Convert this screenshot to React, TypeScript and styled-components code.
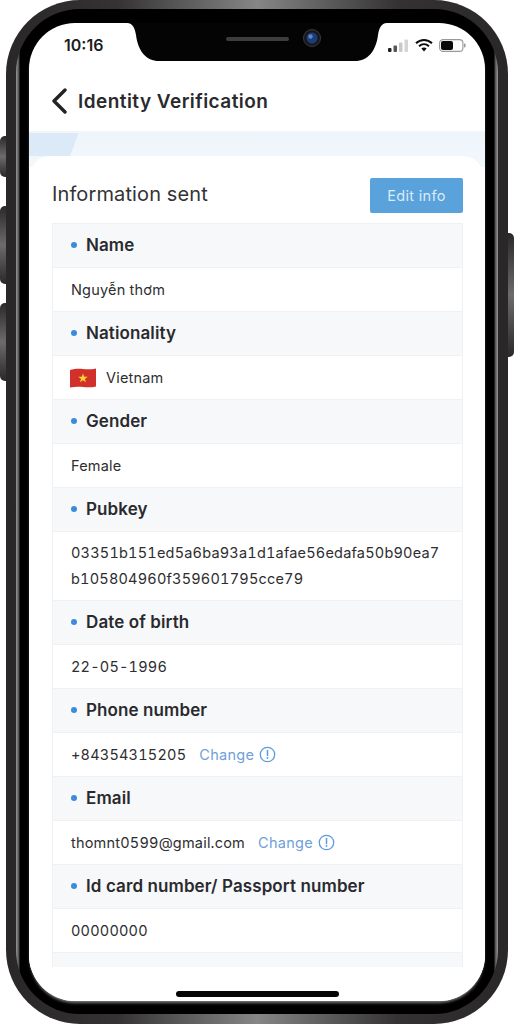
import React from "react";
import styled, { createGlobalStyle } from "styled-components";

const Global = createGlobalStyle`
  html, body { margin: 0; padding: 0; background: #fff; }
  body { font-family: Inter, "Liberation Sans", sans-serif; }
  * { box-sizing: border-box; }
`;

const Stage = styled.div`
  position: relative;
  width: 514px;
  height: 1024px;
  padding: 0 6px;
  overflow: hidden;
`;

const SideButton = styled.div<{ $top: number; $height: number; $right?: boolean }>`
  position: absolute;
  top: ${(p) => p.$top}px;
  height: ${(p) => p.$height}px;
  width: 8px;
  ${(p) => (p.$right ? "right: 0;" : "left: 0;")}
  border-radius: ${(p) => (p.$right ? "0 5px 5px 0" : "5px 0 0 5px")};
  background: linear-gradient(180deg, #2a2829 0%, #6c6c6c 50%, #2a2829 100%);
`;

const Body = styled.div`
  position: relative;
  height: 1024px;
  padding: 9px 10px 10px;
  border-radius: 74px;
  background: linear-gradient(90deg, #2a2728 0%, #343233 22%, #868686 50%, #343233 78%, #2a2728 100%);
`;

const Rim = styled.div`
  height: 100%;
  padding: 14px 13px 13px;
  border-radius: 64px;
  background: linear-gradient(90deg, #9a9a9a 0, #4a4a4a 3px, #000 4px, #000 calc(100% - 4px), #4a4a4a calc(100% - 3px), #9a9a9a 100%);
`;

const Screen = styled.div`
  position: relative;
  display: flex;
  flex-direction: column;
  height: 100%;
  overflow: hidden;
  border-radius: 46px;
  background: #fff;
  color: #222;
  box-shadow: 0 3px 3px -1px #777;
`;

const Notch = styled.svg`
  position: absolute;
  top: 0;
  left: 98px;
  width: 260px;
  height: 38px;
`;

const StatusBar = styled.div`
  display: flex;
  align-items: center;
  justify-content: space-between;
  height: 44px;
  padding: 0 19px 0 35px;
`;

const Time = styled.span`
  font-size: 16px;
  font-weight: 600;
  color: #1c1c1c;
`;

const StatusIcons = styled.div`
  display: flex;
  align-items: center;
  gap: 6px;
`;

const Header = styled.header`
  display: flex;
  align-items: center;
  gap: 11px;
  height: 66px;
  padding: 4px 0 0 22px;
  border-bottom: 2px solid #f3f5f8;
`;

const Title = styled.h1`
  margin: 0;
  font-size: 19px;
  font-weight: 600;
  letter-spacing: 0.45px;
  color: #2a2a2e;
`;

const Main = styled.main`
  flex: 1;
  min-height: 0;
  overflow: hidden;
  padding: 23px 2px 0 1px;
  background:
    linear-gradient(110deg, #dce9f6 0, #dce9f6 46px, transparent 47px) 0 0 / 100% 23px no-repeat,
    linear-gradient(#edf4fb, #f3f8fc) 0 0 / 100% 34px no-repeat,
    #fff;
`;

const Card = styled.section`
  height: 100%;
  overflow: hidden;
  padding: 22px 20px 0 22px;
  border-radius: 20px 20px 0 0;
  background: #fff;
`;

const CardHead = styled.div`
  display: flex;
  align-items: center;
  justify-content: space-between;
  height: 35px;
  margin-bottom: 10px;
`;

const CardTitle = styled.h2`
  margin: 0;
  padding-bottom: 3px;
  font-size: 20px;
  font-weight: 400;
  letter-spacing: 0.12px;
  color: #333;
`;

const EditButton = styled.button`
  width: 93px;
  height: 35px;
  padding: 0;
  border: 0;
  border-radius: 2px;
  background: #5aa2dc;
  color: #dcebf7;
  font: 400 14.5px Inter, "Liberation Sans", sans-serif;
  letter-spacing: 0.3px;
`;

const Table = styled.div`
  border-left: 1px solid #eff1f3;
  border-right: 1px solid #eff1f3;
`;

const LabelRow = styled.div`
  display: flex;
  align-items: center;
  gap: 9px;
  height: 45px;
  padding: 0 0 1px 18px;
  background: #f6f8fa;
  border-top: 1px solid #eff1f3;
  border-bottom: 1px solid #eff1f3;
  font-size: 17px;
  font-weight: 600;
  letter-spacing: 0.1px;
  color: #2a2a2e;
`;

const Dot = styled.span`
  width: 6px;
  height: 6px;
  border-radius: 50%;
  background: #3d8bdc;
`;

const ValueRow = styled.div<{ $tall?: boolean }>`
  display: flex;
  align-items: center;
  gap: 9px;
  height: ${(p) => (p.$tall ? 68 : 43)}px;
  padding-left: 18px;
  font-size: 14.5px;
  line-height: 26px;
  letter-spacing: 0.2px;
  font-feature-settings: "tnum";
  color: #2e2e30;
`;

const FlagIcon = styled.svg`
  margin-left: -2px;
`;

const ChangeLink = styled.span`
  display: inline-flex;
  align-items: center;
  gap: 5px;
  margin-left: 4px;
  letter-spacing: 0.3px;
  color: #6f9fd8;
`;

const Footer = styled.div`
  display: flex;
  align-items: flex-end;
  justify-content: center;
  height: 34px;
  padding-bottom: 4px;
  background: #fff;
`;

const HomeBar = styled.div`
  width: 163px;
  height: 6px;
  border-radius: 3px;
  background: #050505;
`;

const Info = () => (
  <svg width="17" height="17" viewBox="0 0 17 17" fill="none">
    <circle cx="8.5" cy="8.5" r="7.2" stroke="#5f9bdc" strokeWidth="1.3" />
    <path d="M8.5 4.6v5" stroke="#5f9bdc" strokeWidth="1.5" strokeLinecap="round" />
    <circle cx="8.5" cy="12" r="0.9" fill="#5f9bdc" />
  </svg>
);

const Flag = () => (
  <FlagIcon width="28" height="22" viewBox="0 0 28 22">
    <path d="M1 3C6 1.500 10 1.500 14 2s9 .5 13-.5v18c-4 1-9 1-13 .5s-8-.5-13 .5z" fill="#d2302a" />
    <path d="M14 6.500l1.200 3.300h3.500l-2.800 2.100 1.100 3.400-3-2.100-3 2.100 1.100-3.400-2.800-2.100h3.500z" fill="#fbd535" />
  </FlagIcon>
);

type Item = { label: string; value: React.ReactNode; tall?: boolean };

const items: Item[] = [
  { label: "Name", value: "Nguyễn thơm" },
  { label: "Nationality", value: <><Flag /><span>Vietnam</span></> },
  { label: "Gender", value: "Female" },
  { label: "Pubkey", tall: true, value: <span>03351b151ed5a6ba93a1d1afae56edafa50b90ea7<br />b105804960f359601795cce79</span> },
  { label: "Date of birth", value: "22-05-1996" },
  { label: "Phone number", value: <><span>+84354315205</span><ChangeLink>Change <Info /></ChangeLink></> },
  { label: "Email", value: <><span>thomnt0599@gmail.com</span><ChangeLink>Change <Info /></ChangeLink></> },
  { label: "Id card number/ Passport number", value: "00000000" },
];

export default function App() {
  return (
    <Stage>
      <Global />
      <SideButton $top={136} $height={41} />
      <SideButton $top={206} $height={78} />
      <SideButton $top={303} $height={78} />
      <SideButton $right $top={233} $height={124} />
      <Body>
        <Rim>
          <Screen>
            <StatusBar>
              <Time>10:16</Time>
              <StatusIcons>
                <svg width="21" height="13" viewBox="0 0 21 13">
                  <rect x="0" y="9" width="3.500" height="4" rx="1" fill="#222" />
                  <rect x="5.500" y="6.500" width="3.500" height="6.500" rx="1" fill="#555" />
                  <rect x="11" y="3.500" width="3.500" height="9.500" rx="1" fill="#c8c8c8" />
                  <rect x="16.500" y="0.500" width="3.500" height="12.500" rx="1" fill="#d4d4d4" />
                </svg>
                <svg width="18" height="14" viewBox="0 0 18 14" fill="none" stroke="#0c0c0c" strokeWidth="2">
                  <path d="M1 5.200C5.800.800 12.200.800 17 5.200" />
                  <path d="M4 8.300c3-2.700 7-2.700 10 0" />
                  <path d="M9 13.500l2.600-3.100c-1.500-1.200-3.700-1.200-5.200 0z" fill="#0c0c0c" stroke="none" />
                </svg>
                <svg width="27" height="13" viewBox="0 0 27 13">
                  <rect x="0.600" y="0.600" width="23.300" height="11.800" rx="3.500" fill="none" stroke="#999" strokeWidth="1.100" />
                  <rect x="2" y="2" width="12" height="9" rx="2" fill="#0a0a0a" />
                  <rect x="25" y="4.500" width="1.500" height="4" rx="0.700" fill="#999" />
                </svg>
              </StatusIcons>
            </StatusBar>
            <Notch viewBox="0 0 260 38">
              <path d="M0 0H260C254 0 252 6 251 12C249 28 241 38 228 38H32C19 38 11 28 9 12C8 6 6 0 0 0Z" fill="#040405" />
              <rect x="99" y="14" width="63" height="4" rx="2" fill="#3d3d3f" />
              <circle cx="185" cy="15" r="8.500" fill="#17181c" stroke="#3a3a3d" strokeWidth="1" />
              <circle cx="185" cy="15" r="5.500" fill="#1c3d7a" />
              <circle cx="183.500" cy="13.500" r="2.200" fill="#5d83c8" />
            </Notch>
            <Header>
              <svg width="16" height="26" viewBox="0 0 16 26" fill="none">
                <path d="M14 2L3 13l11 11" stroke="#232326" strokeWidth="3.400" strokeLinecap="round" strokeLinejoin="round" />
              </svg>
              <Title>Identity Verification</Title>
            </Header>
            <Main>
              <Card>
                <CardHead>
                  <CardTitle>Information sent</CardTitle>
                  <EditButton>Edit info</EditButton>
                </CardHead>
                <Table>
                  {items.map((item) => (
                    <React.Fragment key={item.label}>
                      <LabelRow><Dot />{item.label}</LabelRow>
                      <ValueRow $tall={item.tall}>{item.value}</ValueRow>
                    </React.Fragment>
                  ))}
                  <LabelRow />
                </Table>
              </Card>
            </Main>
            <Footer><HomeBar /></Footer>
          </Screen>
        </Rim>
      </Body>
    </Stage>
  );
}
